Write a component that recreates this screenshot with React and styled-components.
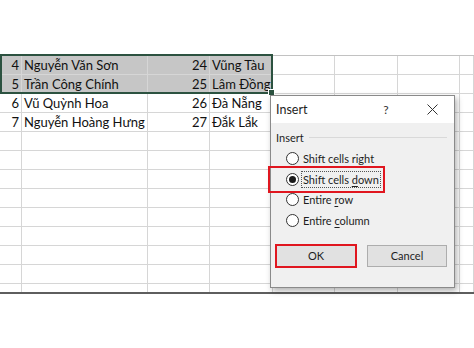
import React from "react";
import styled, { createGlobalStyle } from "styled-components";

const GlobalStyle = createGlobalStyle`
  html, body {
    margin: 0;
    padding: 0;
    background: #ffffff;
  }
`;

const Page = styled.div`
  position: relative;
  width: 474px;
  height: 348px;
  padding-top: 55px;
  box-sizing: border-box;
  background: #ffffff;
  overflow: hidden;
`;

const Sheet = styled.div`
  position: relative;
  display: grid;
  grid-template-columns: 22px 126px 62px 63px 62px 63px 62px 1fr;
  grid-template-rows: repeat(12, 19px) 8px;
  border-top: 1px solid #c2c2c2;
  border-bottom: 2px solid #5e5e5e;
`;

const Cell = styled.div`
  display: flex;
  align-items: flex-end;
  justify-content: ${(p) => (p.$right ? "flex-end" : "flex-start")};
  padding: 0 2px 0 2px;
  box-sizing: border-box;
  border-right: 1px solid #d6d6d6;
  border-bottom: ${(p) => (p.$last ? "none" : "1px solid #d6d6d6")};
  background: ${(p) => (p.$sel ? "#c6c6c6" : "#ffffff")};
  font-family: Lato, "Liberation Sans", sans-serif;
  font-size: 13px;
  line-height: 17px;
  color: #111;
  white-space: nowrap;
`;

const Selection = styled.div`
  position: absolute;
  left: 0;
  top: -2px;
  width: 273px;
  height: 40px;
  box-sizing: border-box;
  border: 2px solid #2c5240;
  pointer-events: none;

  &::after {
    content: "";
    position: absolute;
    right: -4px;
    bottom: -4px;
    width: 5px;
    height: 5px;
    background: #2c5240;
    border: 1px solid #ffffff;
  }
`;

const Dialog = styled.div`
  position: absolute;
  left: 270px;
  top: 95px;
  width: 185px;
  height: 193px;
  box-sizing: border-box;
  border: 1px solid #8a8a8a;
  background: #f0f0f0;
  box-shadow: 2px 3px 6px rgba(0, 0, 0, 0.3);
  display: flex;
  flex-direction: column;
  font-family: Lato, "Liberation Sans", sans-serif;
  color: #1e1e1e;
`;

const TitleBar = styled.div`
  height: 27px;
  display: flex;
  align-items: center;
  padding-left: 5px;
  background: #ffffff;
  font-size: 12.5px;
`;

const Title = styled.span`
  flex: 1;
`;

const HelpButton = styled.span`
  width: 30px;
  text-align: center;
  font-size: 12px;
  color: #333;
`;

const CloseButton = styled.span`
  width: 44px;
  margin-left: 9px;
  display: flex;
  justify-content: center;
  align-items: center;
`;

const Body = styled.div`
  flex: 1;
  display: flex;
  flex-direction: column;
  padding: 7px 7px 0 5px;
  font-size: 11px;
`;

const GroupLabel = styled.div`
  display: flex;
  align-items: center;
  height: 14px;
  margin-bottom: 4.5px;

  &::after {
    content: "";
    flex: 1;
    height: 1px;
    margin-left: 5px;
    background: #d9d9d9;
  }
`;

const RadioRow = styled.div`
  position: relative;
  display: flex;
  align-items: center;
  height: 20.5px;
  padding-left: 10px;

  &::before {
    content: "";
    display: ${(p) => (p.$marked ? "block" : "none")};
    position: absolute;
    left: -8px;
    top: -3px;
    width: 117px;
    height: 27px;
    box-sizing: border-box;
    border: 2.5px solid #e0161f;
  }
`;

const RadioCircle = styled.span`
  position: relative;
  width: 13px;
  height: 13px;
  box-sizing: border-box;
  border-radius: 50%;
  border: 1px solid #333;
  background: #ffffff;
  margin-right: 2px;

  &::after {
    content: "";
    display: ${(p) => (p.$checked ? "block" : "none")};
    position: absolute;
    left: 2px;
    top: 2px;
    width: 7px;
    height: 7px;
    border-radius: 50%;
    background: #1a1a1a;
  }
`;

const RadioText = styled.span`
  padding: 0 1px;
  line-height: 15px;
  border: 1px ${(p) => (p.$focused ? "dotted #555" : "solid transparent")};

  u {
    text-decoration-thickness: 1px;
    text-underline-offset: 2px;
  }
`;

const ButtonRow = styled.div`
  display: flex;
  gap: 11px;
  margin-top: 14px;
`;

const Button = styled.button`
  width: 80px;
  height: 22px;
  box-sizing: border-box;
  border: 1px solid #adadad;
  background: #e1e1e1;
  font-family: inherit;
  font-size: 11px;
  color: #1e1e1e;
  padding: 0;
  outline: ${(p) => (p.$marked ? "2px solid #e0161f" : "none")};
  outline-offset: -1px;
`;

const rows = [
  ["4", "Nguyễn Văn Sơn", "24", "Vũng Tàu"],
  ["5", "Trần Công Chính", "25", "Lâm Đồng"],
  ["6", "Vũ Quỳnh Hoa", "26", "Đà Nẵng"],
  ["7", "Nguyễn Hoàng Hưng", "27", "Đắk Lắk"],
];

const TOTAL_ROWS = 13;
const COLS = 8;

const CloseIcon = () => (
  <svg width="11" height="11" viewBox="0 0 11 11">
    <path d="M0.5 0.5 L10.5 10.5 M10.5 0.5 L0.5 10.5" stroke="#333" strokeWidth="1" />
  </svg>
);

const options = [
  { label: <>Shift cells right</> },
  { label: <>Shift cells <u>d</u>own</>, checked: true },
  { label: <>Entire <u>r</u>ow</> },
  { label: <>Entire <u>c</u>olumn</> },
];

export default function App() {
  const cells = [];
  for (let r = 0; r < TOTAL_ROWS; r++) {
    const data = rows[r] || [];
    for (let c = 0; c < COLS; c++) {
      cells.push(
        <Cell
          key={`${r}-${c}`}
          $right={c === 0 || c === 2}
          $sel={r < 2 && c < 4}
          $last={r === TOTAL_ROWS - 1}
        >
          {data[c] || ""}
        </Cell>
      );
    }
  }

  return (
    <>
      <GlobalStyle />
      <Page>
        <Sheet>
          {cells}
          <Selection />
        </Sheet>

        <Dialog>
          <TitleBar>
            <Title>Insert</Title>
            <HelpButton>?</HelpButton>
            <CloseButton>
              <CloseIcon />
            </CloseButton>
          </TitleBar>
          <Body>
            <GroupLabel>Insert</GroupLabel>
            {options.map((o, i) => (
              <RadioRow key={i} $marked={o.checked}>
                <RadioCircle $checked={o.checked} />
                <RadioText $focused={o.checked}>{o.label}</RadioText>
              </RadioRow>
            ))}
            <ButtonRow>
              <Button $marked>OK</Button>
              <Button>Cancel</Button>
            </ButtonRow>
          </Body>
        </Dialog>
      </Page>
    </>
  );
}
